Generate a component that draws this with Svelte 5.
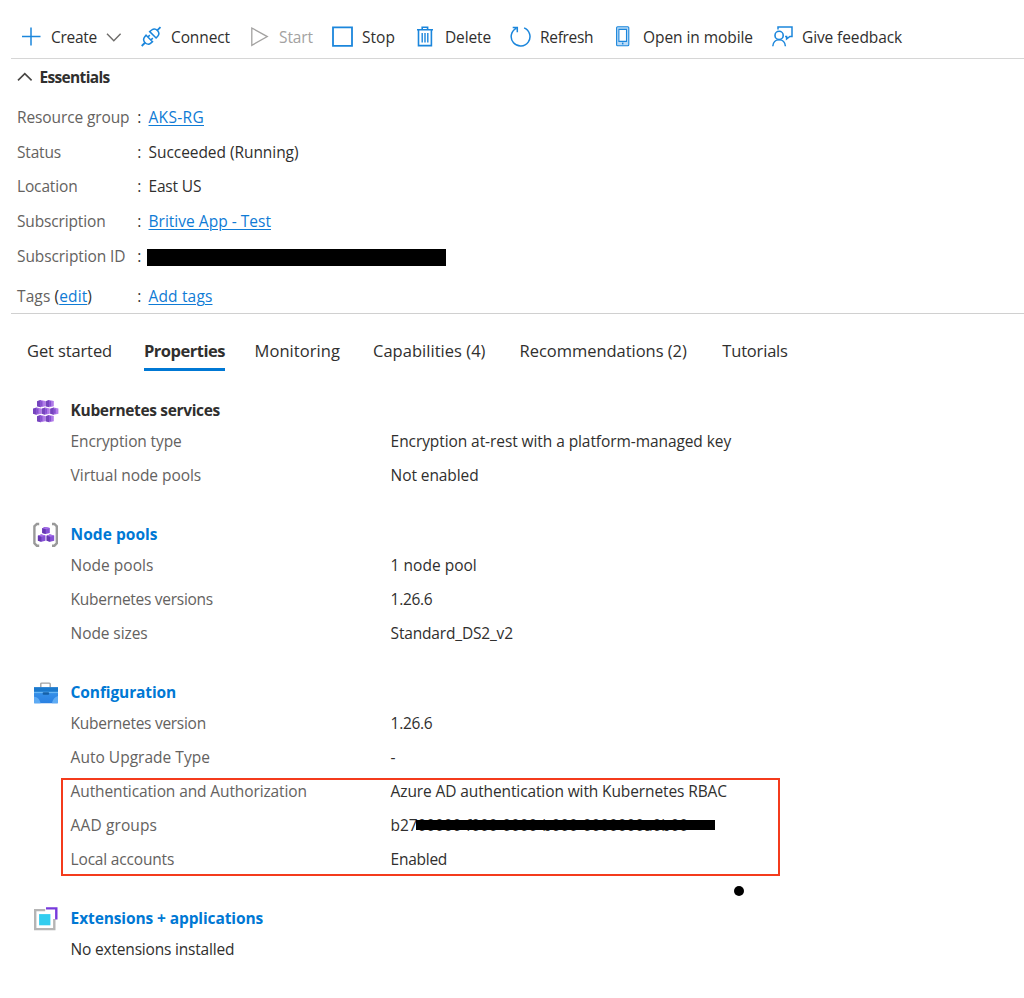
<script>
  const actions = [
    { icon: 'plus', label: 'Create', width: 46, menu: true },
    { icon: 'connect', label: 'Connect', width: 59 },
    { icon: 'play', label: 'Start', width: 34, disabled: true },
    { icon: 'stop', label: 'Stop', width: 33 },
    { icon: 'trash', label: 'Delete', width: 46 },
    { icon: 'refresh', label: 'Refresh', width: 53.3 },
    { icon: 'mobile', label: 'Open in mobile', width: 110 },
    { icon: 'feedback', label: 'Give feedback', width: 100 },
  ];

  const essentials = [
    { label: 'Resource group', lw: 112.5, value: 'AKS-RG', vw: 55.5, link: true },
    { label: 'Status', lw: 44, value: 'Succeeded (Running)', vw: 150 },
    { label: 'Location', lw: 60.5, value: 'East US', vw: 52.7 },
    { label: 'Subscription', lw: 88.5, value: 'Britive App - Test', vw: 122.5, link: true },
    { label: 'Subscription ID', lw: 108.5, redacted: true },
  ];

  const tabs = [
    { label: 'Get started', width: 85 },
    { label: 'Properties', width: 81, active: true },
    { label: 'Monitoring', width: 85.5 },
    { label: 'Capabilities (4)', width: 112.5 },
    { label: 'Recommendations (2)', width: 167.3 },
    { label: 'Tutorials', width: 65.5 },
  ];

  const sections = [
    {
      icon: 'cluster', title: 'Kubernetes services', width: 149.3,
      rows: [
        ['Encryption type', 111, 'Encryption at-rest with a platform-managed key', 340.5],
        ['Virtual node pools', 130.5, 'Not enabled', 88],
      ],
    },
    {
      icon: 'pools', title: 'Node pools', width: 87, link: true,
      rows: [
        ['Node pools', 82.7, '1 node pool', 86.2],
        ['Kubernetes versions', 142.3, '1.26.6', 41.7],
        ['Node sizes', 77, 'Standard_DS2_v2', 122.3],
      ],
    },
    {
      icon: 'toolbox', title: 'Configuration', width: 105.5, link: true,
      rows: [
        ['Kubernetes version', 135.3, '1.26.6', 41.7],
        ['Auto Upgrade Type', 139.3, '-', 6],
      ],
      marked: [
        ['Authentication and Authorization', 236.3, 'Azure AD authentication with Kubernetes RBAC', 336.3],
        ['AAD groups', 86.5, 'b2700000-f000-0000-b000-0000000a0b00', 297.5, true],
        ['Local accounts', 103.5, 'Enabled', 56.5],
      ],
    },
    { icon: 'extension', title: 'Extensions + applications', width: 192.5, link: true, rows: [], note: 'No extensions installed' },
  ];

  function fit(node, width) {
    const range = document.createRange();
    range.selectNodeContents(node);
    const natural = range.getBoundingClientRect().width;
    node.style.letterSpacing = `${(width - natural) / node.textContent.length}px`;
  }
</script>

{#snippet icon(name)}
  {#if name === 'plus'}
    <svg class="ico" viewBox="0 0 22 22"><path d="M10 1.5v18M1 10.5h18.5" stroke-width="1.5" /></svg>
  {:else if name === 'connect'}
    <svg class="ico" viewBox="0 0 22 22">
      <path d="M.7 20l3.5-3.5M16 4.7 19.5 1.1" stroke-width="1.8" />
      <path d="M5.1 9.2 11.5 15.6 9.8 17.1C8 18.7 5.5 18.3 4.1 16.8 2.5 15.2 2.3 12.7 3.8 10.8ZM8.7 5.6 15.1 12 16.7 10.3C18.2 8.6 18 6.1 16.4 4.5 14.9 2.9 12.4 2.7 10.7 4ZM6.9 11l1.9-1.9M9.9 14l1.9-1.9" stroke-width="1.5" />
    </svg>
  {:else if name === 'play'}
    <svg class="ico grey" viewBox="0 0 22 22"><path d="M2.8 2v17.3L18.3 10.6Z" stroke-width="1.3" /></svg>
  {:else if name === 'stop'}
    <svg class="ico" viewBox="0 0 22 22"><path d="M1 1.3h19v18.5H1z" stroke-width="1.8" /></svg>
  {:else if name === 'trash'}
    <svg class="ico" viewBox="0 0 22 22">
      <path d="M2 3.7h16M7.2 3.6V1.2h5.4v2.4M3.5 4v15.6h12.9V4" stroke-width="1.6" />
      <path d="M7.2 7v9.5M10 7v9.5M12.8 7v9.5" stroke-width="1.4" />
    </svg>
  {:else if name === 'refresh'}
    <svg class="ico" viewBox="0 0 22 22">
      <path d="M14.1 1.9A9.4 9.4 0 1 1 6.2 2.3M2.7 1.5h4.6v4.8" stroke-width="1.5" />
    </svg>
  {:else if name === 'mobile'}
    <svg class="ico" viewBox="0 0 22 22">
      <path d="M4.6.8h10.2q1 0 1 1v17q0 1-1 1H4.6q-1 0-1-1v-17q0-1 1-1Z" fill="#b9daf6" stroke-width="1.1" />
      <path d="M5.9 3.4h7.6v12H5.9z" fill="#fff" stroke-width="1.1" />
      <path d="M9.7 16.6v1.8" stroke-width="1.5" />
    </svg>
  {:else if name === 'feedback'}
    <svg class="ico" viewBox="0 0 22 22">
      <circle cx="7.1" cy="9.4" r="4.1" stroke-width="1.6" />
      <path d="M.8 20.2C1 16.4 3.6 13.8 7.1 13.8s6.1 2.6 6.3 6.4M6 3.5V1h14v9.4h-2.1L14.6 13v-2.6h-1.5" stroke-width="1.5" />
    </svg>
  {:else if name === 'cluster'}
    <svg class="pic low" viewBox="0 0 26 26">
      {#each [[4, 1], [12.6, 1], [0, 8.5], [8.6, 8.5], [17.2, 8.5], [4, 16], [12.6, 16]] as [x, y]}
        <g transform="translate({x} {y})">
          <path d="M0 1.2 3.6 0 8.2 1v5.2L3.6 7.3 0 6.2Z" fill="#b17be9" />
          <path d="M0 1.2 3.6 0v7.3L0 6.2Z" fill="#7544bd" />
          <path d="M3.6 1.2 5.5 1v5.3l-1.9-.2Z" fill="#8651d0" />
        </g>
      {/each}
    </svg>
  {:else if name === 'pools'}
    <svg class="pic" viewBox="0 0 26 26">
      <path d="M6.2 2H3.8L1.4 4.3v17L3.8 23.7h2.4M19 2h2.4l2.4 2.3v17L21.4 23.7H19" fill="none" stroke="#999" stroke-width="2.4" />
      {#each [[9.2, 5], [4.9, 12.6], [13.6, 12.6]] as [x, y]}
        <g transform="translate({x} {y})">
          <path d="M0 1.2 3.5 0 7.6 1v5.1L3.5 7.1 0 6.1Z" fill="#8551d5" />
          <path d="M0 1.2 3.5 0v7.1L0 6.1Z" fill="#6638b1" />
          <path d="m0 1.2 3.5-1.2L7.6 1 4 2.2Z" fill="#a56ee9" />
        </g>
      {/each}
    </svg>
  {:else if name === 'toolbox'}
    <svg class="pic low" viewBox="0 0 26 26">
      <defs>
        <linearGradient id="case" x2="0" y2="1"><stop stop-color="#3a97ea" /><stop offset="1" stop-color="#2a80e2" /></linearGradient>
      </defs>
      <path d="M7.8 6.7V3q0-.9.9-.9h7.6q.9 0 .9.9v3.7" fill="none" stroke="#a3a3a3" stroke-width="1.4" />
      <path d="M1 6.3h24v15.3q0 .7-.7.7H1.7q-.7 0-.7-.7Z" fill="url(#case)" />
      <path d="M1 6.3h24v4.6H1Z" fill="#1c79cc" />
      <path d="M1 10.8h24v1.3H1Z" fill="#68b7f5" />
      <path d="M1 15.8q5-.3 6.7 6.5H1ZM25 15q-5 1.5-6 7.3h6Z" fill="#5eabf4" />
      <rect x="9.7" y="11.2" width="6.4" height="2.6" rx=".8" fill="#1560a8" />
    </svg>
  {:else}
    <svg class="pic" viewBox="0 0 26 26">
      <path d="M12.2 4.1H2.2v19H21.3V13" fill="none" stroke="#b5b5b5" stroke-width="2.4" />
      <path d="M13 2.4h10.3v11" fill="none" stroke="#773adc" stroke-width="2.4" />
      <path d="M6.1 8.1h11.3v11.2H6.1z" fill="#32cdef" />
    </svg>
  {/if}
{/snippet}

{#snippet property([label, lw, value, vw, struck])}
  <div class="row">
    <span class="name"><span use:fit={lw}>{label}</span></span>
    <span class="value" class:struck><span use:fit={vw}>{value}</span></span>
  </div>
{/snippet}

<main>
  <nav class="toolbar">
    {#each actions as a}
      <div class="action" class:disabled={a.disabled}>
        {@render icon(a.icon)}
        <span use:fit={a.width}>{a.label}</span>
        {#if a.menu}
          <svg class="caret" viewBox="0 0 16 10"><path d="M1 1.7 7.8 8.7 14.6 1.7" /></svg>
        {/if}
      </div>
    {/each}
  </nav>

  <section class="essentials">
    <h2>
      <svg class="caret dark" viewBox="0 0 16 10"><path d="M1 8.4 7.8 1.6 14.6 8.4" /></svg>
      <span use:fit={70}>Essentials</span>
    </h2>
    {#each essentials as e}
      <div class="fact">
        <span class="name"><span use:fit={e.lw}>{e.label}</span></span>
        <span class="colon">:</span>
        {#if e.redacted}
          <span class="redaction"></span>
        {:else}
          <span class="value" class:link={e.link}><span use:fit={e.vw}>{e.value}</span></span>
        {/if}
      </div>
    {/each}
    <div class="fact tags">
      <span class="name"><span use:fit={75}>Tags <i>(</i><u>edit</u><i>)</i></span></span>
      <span class="colon">:</span>
      <span class="link"><span use:fit={64}>Add tags</span></span>
    </div>
  </section>

  <nav class="tabs">
    {#each tabs as t}
      <div class="tab" class:active={t.active}><span use:fit={t.width}>{t.label}</span></div>
    {/each}
  </nav>

  <div class="sections">
    {#each sections as s}
      <section class="group">
        {@render icon(s.icon)}
        <div class="body">
          <h3 class:blue={s.link}><span use:fit={s.width}>{s.title}</span></h3>
          {#each s.rows as r}{@render property(r)}{/each}
          {#if s.marked}
            <div class="marked">
              {#each s.marked as r}{@render property(r)}{/each}
            </div>
          {/if}
          {#if s.note}<div class="row"><span use:fit={163.7}>{s.note}</span></div>{/if}
        </div>
      </section>
    {/each}
  </div>
</main>

<style>
  :global(body) { margin: 0; background: #fff; }
  main {
    width: 1024px;
    height: 998px;
    overflow: hidden;
    background: #fff;
    color: #302f2e;
    font: 15.5px/20px "Open Sans", "Noto Sans", sans-serif;
  }
  span { white-space: nowrap; }
  .toolbar {
    display: grid;
    grid-template-columns: 120px 108px 83px 83px 95px 103px 159px auto;
    align-items: center;
    box-sizing: border-box;
    height: 59px;
    margin-left: 11px;
    padding: 15px 0 0 10px;
    border-bottom: 1px solid #d6d6d6;
  }
  .action { display: flex; align-items: center; gap: 8px; }
  .disabled { color: #a3a2a1; }
  .ico { width: 22px; height: 22px; flex: none; fill: none; stroke: #1b86dc; }
  .ico.grey { stroke: #a3a2a1; }
  .caret { width: 16px; height: 10px; flex: none; fill: none; stroke: #6e6c6a; stroke-width: 1.4; }
  .caret.dark { stroke: #484644; stroke-width: 1.6; }
  .action .caret { margin-left: 1px; }
  .essentials {
    box-sizing: border-box;
    height: 255px;
    margin-left: 11px;
    padding: 8px 0 0 6px;
    border-bottom: 1px solid #d0d0d0;
  }
  h2, h3 { margin: 0; font-size: 15.5px; font-weight: 700; }
  h2 { display: flex; align-items: center; gap: 6.5px; height: 20px; margin-bottom: 12.5px; }
  .fact {
    display: grid;
    grid-template-columns: 119.5px 12px auto;
    align-items: center;
    height: 34.7px;
  }
  .tags { margin-top: 6px; }
  .name { color: #646260; }
  .name i { font-style: normal; color: #302f2e; }
  .colon { padding-left: 0.7px; }
  .link, u { color: #0f7bd5; text-decoration: underline; text-decoration-thickness: 1.3px; text-underline-offset: 2px; }
  .redaction { width: 299px; height: 17px; margin: 3px 0 0 -2px; background: #000; }
  .tabs {
    display: flex;
    padding: 22px 0 0 27px;
    font-size: 16.5px;
    line-height: 30px;
  }
  .tab { box-sizing: border-box; height: 35.5px; margin-right: 33px; }
  .tab:nth-child(1) { margin-right: 32px; }
  .tab:nth-child(2) { margin-right: 29.5px; }
  .tab:nth-child(4) { margin-right: 34px; }
  .tab:nth-child(5) { margin-right: 35.5px; }
  .active { height: 35px; font-weight: 700; border-bottom: 3px solid #0078d4; }
  .sections { display: flex; flex-direction: column; gap: 28px; padding: 24px 0 0 33px; }
  .group { display: flex; gap: 11.6px; }
  .pic { width: 26px; height: 26px; flex: none; margin-top: 2px; }
  .pic.low { margin-top: 3px; }
  .body { flex: 1; }
  h3 { height: 28px; line-height: 28px; }
  h3.blue { color: #0078d4; }
  .row { display: grid; grid-template-columns: 320px auto; align-items: center; height: 34px; }
  .marked { position: relative; }
  .marked::before {
    content: "";
    position: absolute;
    inset: 4px auto auto -10px;
    box-sizing: border-box;
    width: 719px;
    height: 98px;
    border: 2px solid #f43b1c;
  }
  .marked::after {
    content: "";
    position: absolute;
    top: 112px;
    left: 663px;
    width: 10px;
    height: 10px;
    border-radius: 50%;
    background: #000;
  }
  .struck { position: relative; }
  .struck::after {
    content: "";
    position: absolute;
    top: 5px;
    left: 25px;
    width: 299px;
    height: 10px;
    background: #000;
  }
</style>
